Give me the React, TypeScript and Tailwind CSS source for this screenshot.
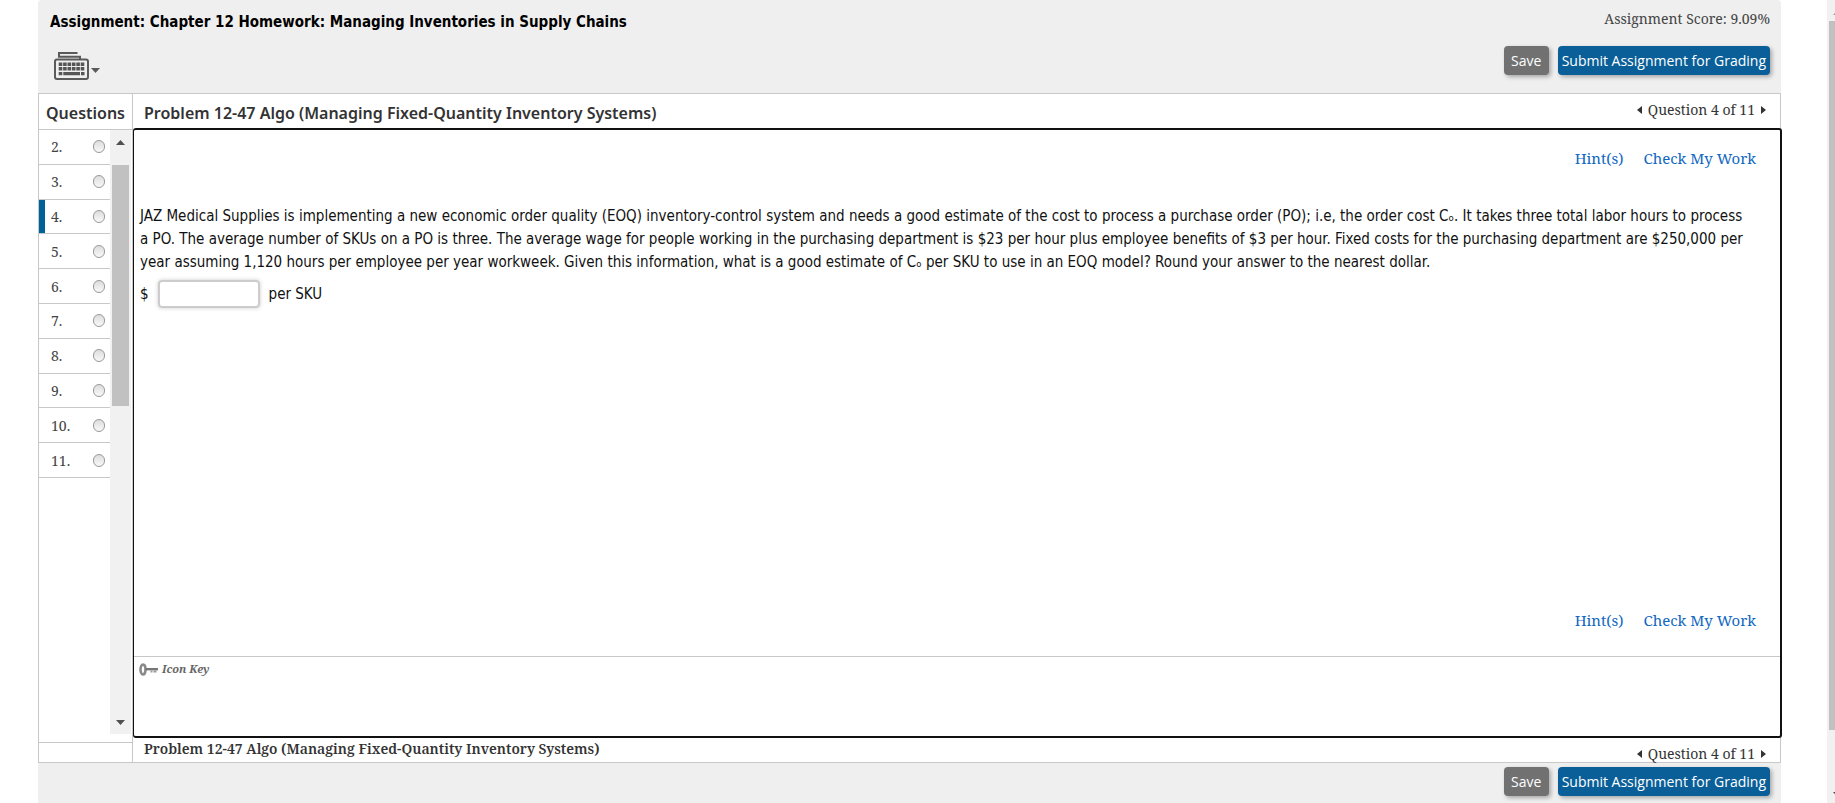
import React from 'react';
import { clsx } from 'clsx';

const questions = [2, 3, 4, 5, 6, 7, 8, 9, 10, 11];
const currentQuestion = 4;
const problemTitle = 'Problem 12-47 Algo (Managing Fixed-Quantity Inventory Systems)';

const KeyboardIcon: React.FC = () => (
  <svg width="35" height="28" viewBox="0 0 35 28" fill="none" aria-hidden="true">
    <path d="M23.500 1H5V4.700H26V7" stroke="#5a5a5a" strokeWidth="2" />
    <rect x="1" y="7.500" width="33" height="19.500" rx="2" stroke="#5a5a5a" strokeWidth="2" />
    <path d="M4.700 12.300H30.500M4.700 16.800H30.500" stroke="#555" strokeWidth="3.400" strokeDasharray="3.600 0.800" />
    <path d="M4.700 21.600H8.300M9.300 21.600H26M27 21.600H30.500" stroke="#555" strokeWidth="3.400" />
  </svg>
);

const KeyIcon: React.FC = () => (
  <svg width="19" height="13" viewBox="0 0 19 13" fill="none" aria-hidden="true">
    <ellipse cx="4" cy="6.500" rx="2.500" ry="5" stroke="#8a8a8a" strokeWidth="2.600" />
    <path d="M6.500 6.200H19" stroke="#777" strokeWidth="2.400" />
    <path d="M11.500 8.500H13.500M14.500 8.500H17.500" stroke="#999" strokeWidth="2" />
  </svg>
);

const Arrow: React.FC<{ direction: 'up' | 'down' | 'left' | 'right'; className?: string }> = ({
  direction,
  className,
}) => {
  const points = {
    up: '0,5 4.500,0 9,5',
    down: '0,0 9,0 4.500,5',
    left: '5,0 5,8 0,4',
    right: '0,0 5,4 0,8',
  };
  const vertical = direction === 'up' || direction === 'down';
  return (
    <svg
      width={vertical ? 9 : 5}
      height={vertical ? 5 : 8}
      className={clsx('shrink-0 fill-current', className)}
      aria-hidden="true"
    >
      <polygon points={points[direction]} />
    </svg>
  );
};

const ActionButtons: React.FC = () => (
  <div className="flex items-start gap-[9px] font-['Open_Sans',sans-serif] text-[14px] leading-[29px] text-white">
    <button className="min-w-[45px] rounded bg-[#717171] px-1 shadow-[2px_2px_4px_rgba(0,0,0,0.3)]">Save</button>
    <button className="rounded bg-[#0a5f98] px-1 shadow-[2px_2px_4px_rgba(0,0,0,0.3)]">
      Submit Assignment for Grading
    </button>
  </div>
);

const QuestionPager: React.FC = () => (
  <div className="flex items-center gap-[6px] text-[14px] leading-8 text-[#333]">
    <button aria-label="Previous question">
      <Arrow direction="left" />
    </button>
    <span>Question 4 of 11</span>
    <button aria-label="Next question">
      <Arrow direction="right" />
    </button>
  </div>
);

const HelpLinks: React.FC = () => (
  <div className="flex justify-end gap-5 pr-6 text-[15px] leading-6 text-[#1068bf]">
    <a href="#hints">Hint(s)</a>
    <a href="#check">Check My Work</a>
  </div>
);

const QuestionList: React.FC = () => (
  <nav className="flex min-h-0 flex-1" aria-label="Questions">
    <ul className="flex h-[348px] flex-1 flex-col">
      {questions.map(q => (
        <li key={q} className="flex-1 border-b border-[#c8c8c8]">
          <a
            href={`#question-${q}`}
            className={clsx(
              'flex h-full items-center justify-between border-l-[6px] pr-[5px] pl-[6px] text-[14px] text-[#444]',
              q === currentQuestion ? 'border-[#00629b]' : 'border-transparent'
            )}
          >
            {q}.
            <span className="h-[13px] w-3 rounded-full border border-[#999] bg-linear-to-b from-[#ddd] to-[#f8f8f8]" />
          </a>
        </li>
      ))}
    </ul>
    {/* scrollbar */}
    <div className="mr-px flex w-[21px] flex-col items-center bg-[#f1f1f1] text-[#505050]">
      <Arrow direction="up" className="my-[10px]" />
      <div className="mt-[10px] h-[241px] w-[17px] bg-[#c1c1c1]" />
      <Arrow direction="down" className="mt-auto mb-[9px]" />
    </div>
  </nav>
);

const Question: React.FC = () => (
  <main className="-mr-[2px] flex h-[610px] flex-col rounded-[3px] border-2 border-l-1 border-[#111] bg-white">
    <div className="pt-4">
      <HelpLinks />
    </div>
    <div className="pt-[35px] pr-[30px] pl-[6px] font-['DejaVu_Sans_Condensed','DejaVu_Sans',sans-serif] text-[15px] leading-[23px] text-[#111]">
      <p>
        JAZ Medical Supplies is implementing a new economic order quality (EOQ) inventory-control system and needs a
        good estimate of the cost to process a purchase order (PO); i.e, the order cost Cₒ. It takes three total labor
        hours to process a PO. The average number of SKUs on a PO is three. The average wage for people working in the
        purchasing department is $23 per hour plus employee benefits of $3 per hour. Fixed costs for the purchasing
        department are $250,000 per year assuming 1,120 hours per employee per year workweek. Given this information,
        what is a good estimate of Cₒ per SKU to use in an EOQ model? Round your answer to the nearest dollar.
      </p>
      <div className="mt-[6px] flex items-center gap-[9px]">
        <label htmlFor="answer">$</label>
        <input
          id="answer"
          type="text"
          className="h-7 w-[102px] rounded border-2 border-[#ccc] px-1 shadow-[0_0_4px_rgba(0,0,0,0.2)]"
        />
        <span>per SKU</span>
      </div>
    </div>
    <div className="mt-auto">
      <HelpLinks />
      <div className="mt-6 h-20 border-t border-[#c8c8c8] px-[5px] pt-[3px]">
        <a
          href="#icon-key"
          className="flex items-center gap-1 text-[11px] leading-[18px] font-bold text-[#666] italic"
        >
          <KeyIcon />
          Icon Key
        </a>
      </div>
    </div>
  </main>
);

export default function App() {
  return (
    <div className="flex bg-white font-['Noto_Serif','DejaVu_Serif_Condensed',serif]">
      <div className="mr-[46px] ml-[38px] min-w-0 flex-1">
        <header className="flex h-[93px] justify-between rounded-t bg-[#efefef] pr-[11px] pl-3">
          <div>
            <h1 className="pt-3 font-['DejaVu_Sans_Condensed','DejaVu_Sans',sans-serif] text-[15px] leading-5 font-bold text-black">
              Assignment: Chapter 12 Homework: Managing Inventories in Supply Chains
            </h1>
            <button className="mt-5 ml-1 flex items-center gap-[2px] text-[#5a5a5a]" aria-label="Keyboard tools">
              <KeyboardIcon />
              <Arrow direction="down" className="mt-[9px]" />
            </button>
          </div>
          <div className="flex flex-col items-end">
            <p className="mt-[9px] mb-[17px] text-[14px] leading-5 text-[#444]">Assignment Score: 9.09%</p>
            <ActionButtons />
          </div>
        </header>

        <div className="flex border border-[#c8c8c8]">
          <aside className="flex w-[94px] shrink-0 flex-col border-r border-[#c8c8c8]">
            <h2 className="h-9 border-b border-[#c8c8c8] pt-[7px] text-center font-['Noto_Sans',sans-serif] text-[16px] leading-6 font-semibold text-[#333]">
              Questions
            </h2>
            <QuestionList />
            <div className="mt-2 h-5 border-t border-[#c8c8c8]" />
          </aside>
          <section className="min-w-0 flex-1">
            <div className="flex h-[34px] items-start justify-between pr-[14px] pl-[11px]">
              <h2 className="pt-[7px] font-['Noto_Sans',sans-serif] text-[16px] leading-6 font-semibold text-[#333]">
                {problemTitle}
              </h2>
              <QuestionPager />
            </div>
            <Question />
            <div className="flex h-6 items-start justify-between pr-[14px] pl-[11px]">
              <h3 className="pt-px text-[14px] leading-5 font-semibold text-[#333]">{problemTitle}</h3>
              <QuestionPager />
            </div>
          </section>
        </div>

        <footer className="flex h-10 justify-end bg-[#efefef] pt-1 pr-[11px]">
          <ActionButtons />
        </footer>
      </div>

      {/* page scrollbar, clipped by the window edge */}
      <div className="flex w-2 shrink-0 flex-col overflow-hidden bg-[#f1f1f1] pl-[2px]">
        <Arrow direction="up" className="mt-[10px] ml-1 text-[#a3a3a3]" />
        <div className="mt-[6px] h-[709px] bg-[#c1c1c1]" />
        <Arrow direction="down" className="mt-auto mb-[6px] ml-1 text-[#505050]" />
      </div>
    </div>
  );
}
